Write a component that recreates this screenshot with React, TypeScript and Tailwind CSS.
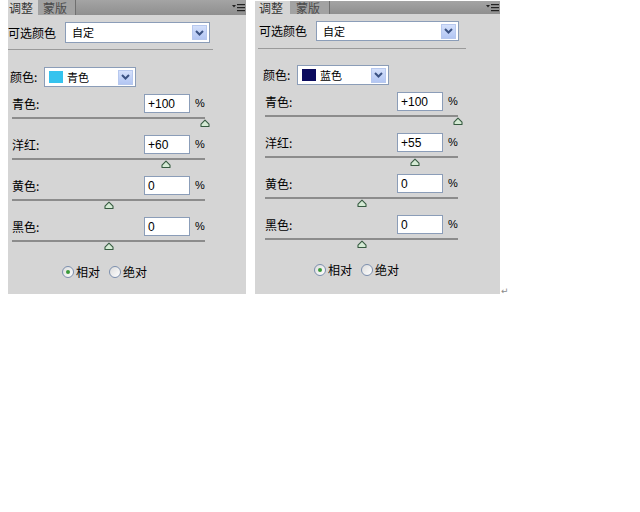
import React from 'react'

type Slider = { label: string; value: number }

type PanelLayout = {
  box: string
  bar: string
  tabActive: string
  tabOther: string
  header: string
  headerSelect: string
  separator: string
  colorRow: string
  colorSelect: string
  sliders: string
  radios: string
}

const font = "font-['Noto_Sans_CJK_SC','Noto_Sans',sans-serif]"

// little green slider handle
const Thumb: React.FC<{ pct: number }> = ({ pct }) => (
  <svg
    width="11"
    height="8"
    viewBox="0 0 11 8"
    className="absolute top-[2px] -translate-x-1/2"
    style={{ left: `${pct}%` }}
  >
    <path d="M1.5 7.5 L1.5 5.2 L5.5 1.2 L9.5 5.2 L9.5 7.5 Z" fill="#d4ead4" stroke="#365a40" strokeWidth="1.1" strokeLinejoin="round" />
  </svg>
)

const ArrowButton: React.FC = () => (
  <div className="ml-auto mr-[2px] flex h-[15px] w-[15px] items-center justify-center border border-[#b7c8ee] bg-gradient-to-b from-[#d4e0fb] to-[#b3c6f3]">
    <svg width="9" height="6" viewBox="0 0 9 6">
      <path d="M1 1 L4.5 4.5 L8 1" fill="none" stroke="#3b5283" strokeWidth="2" />
    </svg>
  </div>
)

const MenuIcon: React.FC = () => (
  <svg width="13" height="9" viewBox="0 0 13 9" className="ml-auto mr-[1px]">
    <path d="M0 2 L4 2 L2 4.5 Z" fill="#222" />
    <rect x="5" y="1" width="8" height="1.2" fill="#222" />
    <rect x="5" y="4" width="8" height="1.2" fill="#222" />
    <rect x="5" y="7" width="8" height="1.2" fill="#222" />
  </svg>
)

const Radio: React.FC<{ checked?: boolean; label: string }> = ({ checked, label }) => (
  <div className="flex items-center gap-[2px]">
    <div className="flex h-[12px] w-[12px] items-center justify-center rounded-full border border-[#7c8fae] bg-gradient-to-br from-[#dcdcdc] to-white">
      {checked && <div className="h-[4px] w-[4px] rounded-full bg-[#3a9a3a]" />}
    </div>
    <span className="text-[12px] leading-[14px] text-black">{label}</span>
  </div>
)

const Panel: React.FC<{
  layout: PanelLayout
  swatch: string
  colorName: string
  sliders: Slider[]
}> = ({ layout, swatch, colorName, sliders }) => (
  <div className={`flex flex-col bg-[#d5d5d5] ${font} ${layout.box}`}>
    {/* tab strip */}
    <div className={`flex items-stretch bg-gradient-to-b from-[#a4a4a4] to-[#8f8f8f] ${layout.bar}`}>
      <span className={`shrink-0 bg-[#d5d5d5] text-[12px] text-[#333] ${layout.tabActive}`}>调整</span>
      <span className={`shrink-0 border-r border-[#6f6f6f] bg-[#a2a2a2] text-[12px] text-[#4a4a4a] ${layout.tabOther}`}>蒙版</span>
      <div className="flex flex-1 items-center">
        <MenuIcon />
      </div>
    </div>

    {/* preset row */}
    <div className={`flex items-center ${layout.header}`}>
      <span className="w-[57px] shrink-0 text-[12px] text-black">可选颜色</span>
      <div className={`flex items-center border border-[#8b9db8] bg-white ${layout.headerSelect}`}>
        <span className="pl-[6px] text-[11px] text-black">自定</span>
        <ArrowButton />
      </div>
    </div>
    <div className={`h-px bg-[#9a9a9a] ${layout.separator}`} />

    {/* colour picker row */}
    <div className={`flex items-center ${layout.colorRow}`}>
      <span className="w-[34px] shrink-0 text-[12px] text-black">颜色:</span>
      <div className={`flex items-center border border-[#8b9db8] bg-white ${layout.colorSelect}`}>
        <div className="ml-[4px] h-[12px] w-[14px]" style={{ backgroundColor: swatch }} />
        <span className="pl-[4px] text-[11px] text-black">{colorName}</span>
        <ArrowButton />
      </div>
    </div>

    {/* sliders */}
    <div className={`flex flex-col gap-[16px] ${layout.sliders}`}>
      {sliders.map((s) => (
        <div key={s.label} className="flex w-[193px] flex-col">
          <div className="flex h-[19px] items-center">
            <span className="w-[132px] text-[12px] text-black">{s.label}</span>
            <div className="flex h-[19px] w-[46px] items-center border border-[#8b9db8] bg-white pl-[3px] font-['Liberation_Sans',sans-serif] text-[12px] text-black">
              {s.value > 0 ? `+${s.value}` : `${s.value}`}
            </div>
            <span className="ml-[5px] font-['Liberation_Sans',sans-serif] text-[11px] text-black">%</span>
          </div>
          <div className="relative mt-[4px] h-[2px] bg-[#8c8c8c]">
            <Thumb pct={((s.value + 100) / 200) * 100} />
          </div>
        </div>
      ))}
    </div>

    {/* mode */}
    <div className={`flex items-center gap-[9px] ${layout.radios}`}>
      <Radio checked label="相对" />
      <Radio label="绝对" />
    </div>
  </div>
)

const leftLayout: PanelLayout = {
  box: 'w-[238px] h-[294px]',
  bar: 'h-[15px]',
  tabActive: 'w-[30px] pl-[1px] leading-[15px]',
  tabOther: 'w-[38px] pl-[5px] leading-[15px]',
  header: 'mt-[7px] h-[21px]',
  headerSelect: 'h-[21px] w-[145px]',
  separator: 'mt-[6px] w-[205px]',
  colorRow: 'mt-[17px] h-[20px] pl-[2px]',
  colorSelect: 'h-[20px] w-[92px]',
  sliders: 'mt-[7px] pl-[4px]',
  radios: 'mt-[23px] pl-[54px]',
}

const rightLayout: PanelLayout = {
  box: 'w-[245px] h-[293px]',
  bar: 'h-[13px]',
  tabActive: 'w-[35px] pl-[4px] leading-[13px]',
  tabOther: 'w-[40px] pl-[6px] leading-[13px]',
  header: 'mt-[7px] h-[20px] pl-[4px]',
  headerSelect: 'h-[20px] w-[143px]',
  separator: 'mt-[7px] ml-[3px] w-[208px]',
  colorRow: 'mt-[16px] h-[20px] pl-[8px]',
  colorSelect: 'h-[20px] w-[92px]',
  sliders: 'mt-[7px] pl-[10px]',
  radios: 'mt-[23px] pl-[59px]',
}

export default function App() {
  return (
    <div className="h-[512px] w-[640px] bg-white">
      <div className="flex items-end pl-[8px]">
        <Panel
          layout={leftLayout}
          swatch="#35c3ee"
          colorName="青色"
          sliders={[
            { label: '青色:', value: 100 },
            { label: '洋红:', value: 60 },
            { label: '黄色:', value: 0 },
            { label: '黑色:', value: 0 },
          ]}
        />
        <div className="ml-[9px]">
          <Panel
            layout={rightLayout}
            swatch="#0b0b5e"
            colorName="蓝色"
            sliders={[
              { label: '青色:', value: 100 },
              { label: '洋红:', value: 55 },
              { label: '黄色:', value: 0 },
              { label: '黑色:', value: 0 },
            ]}
          />
        </div>
        <span className="mb-[-2px] ml-[1px] self-end font-['DejaVu_Sans',sans-serif] text-[9px] leading-none text-[#8a8a8a]">↵</span>
      </div>
    </div>
  )
}
